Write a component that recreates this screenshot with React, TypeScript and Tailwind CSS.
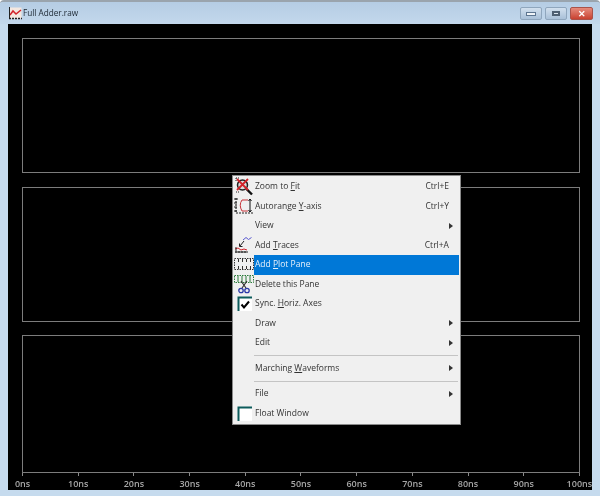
const ticks = ["0ns","10ns","20ns","30ns","40ns","50ns","60ns","70ns","80ns","90ns","100ns"];

function Mn({ children }: { children: string }) {
  return <span className="underline underline-offset-1">{children}</span>;
}

function IconZoom() {
  return (
    <svg width="20" height="19" viewBox="0 0 20 19" fill="none">
      <circle cx="8.500" cy="8" r="5" stroke="#222" strokeWidth="1.500" fill="#dcdcdc" />
      <path d="M12.500 12l5.500 5.500" stroke="#111" strokeWidth="2.400" />
      <path d="M3 2l11 11M14 2L3 13" stroke="#d2232a" strokeWidth="1.800" />
      <path d="M2 1h4M2 1v4M2 15h4" stroke="#222" strokeWidth="1" strokeDasharray="1 1" />
    </svg>
  );
}
function IconAuto() {
  return (
    <svg width="20" height="19" viewBox="0 0 20 19" fill="none">
      <path d="M2 1v15h17" stroke="#222" strokeWidth="1.200" strokeDasharray="2 1" />
      <path d="M0 2h4M0 6h3M0 10h3M0 14h3" stroke="#222" strokeWidth="1" />
      <path d="M14 3H8Q4.500 8 8 14h6" stroke="#c9343a" strokeWidth="1" />
      <path d="M16 2v13M14.500 4L16 2l1.500 2M14.500 13l1.500 2 1.500-2" stroke="#111" strokeWidth="1" />
    </svg>
  );
}
function IconTraces() {
  return (
    <svg width="20" height="19" viewBox="0 0 20 19" fill="none">
      <path d="M9 4l3-2.500 2.500 2 3-2" stroke="#5a5ad0" strokeWidth="1" />
      <path d="M10 5L6 10" stroke="#222" strokeWidth="1" />
      <path d="M5.500 7.500v3H8.500" stroke="#222" strokeWidth="1" />
      <path d="M1 13l3-1 3 2 3-1 3 1" stroke="#d2232a" strokeWidth="1" />
      <path d="M1 16h13M2 11v6M5 15v2M8 15v2M11 15v2" stroke="#222" strokeWidth="1" />
    </svg>
  );
}
function IconPlotPane() {
  return (
    <svg width="20" height="19" viewBox="0 0 20 19" fill="none">
      <rect x="0.500" y="3.500" width="19" height="11" stroke="#333" strokeDasharray="1.500 1" />
      <path d="M1 9.500h18" stroke="#e8eef5" strokeWidth="1" strokeDasharray="1.500 1" />
      <path d="M4.500 4v3M8.500 4v3M12.500 4v3M16.500 4v3M4.500 11v3M8.500 11v3M12.500 11v3M16.500 11v3" stroke="#333" strokeWidth="1" />
    </svg>
  );
}
function IconDelete() {
  return (
    <svg width="20" height="19" viewBox="0 0 20 19" fill="none">
      <rect x="0.500" y="0.500" width="19" height="7" stroke="#2a7a3a" strokeDasharray="1.500 1" />
      <path d="M4 1v6M8 1v6M12 1v6M16 1v6" stroke="#2a7a3a" strokeWidth="1" />
      <path d="M7 6l5 7M13 6l-5 7" stroke="#333" strokeWidth="1.200" />
      <circle cx="7" cy="15.500" r="2.200" stroke="#2c3aa8" strokeWidth="1.300" />
      <circle cx="13" cy="15.500" r="2.200" stroke="#2c3aa8" strokeWidth="1.300" />
    </svg>
  );
}
function IconSync() {
  return (
    <svg width="20" height="19" viewBox="0 0 20 19" fill="none">
      <rect x="4" y="3" width="14" height="14" fill="#fff" />
      <path d="M4.500 17V3.500H18" stroke="#0d5c5c" strokeWidth="2" />
      <path d="M7.500 10.500l2.500 3 5-6" stroke="#000" strokeWidth="2" />
    </svg>
  );
}
function IconFloat() {
  return (
    <svg width="20" height="19" viewBox="0 0 20 19" fill="none">
      <rect x="4" y="3" width="14" height="14" fill="#fff" />
      <path d="M4.500 17V3.500H18" stroke="#0d5c5c" strokeWidth="2" />
    </svg>
  );
}

type Row = {
  label: React.ReactNode;
  icon?: React.ReactNode;
  shortcut?: string;
  sub?: boolean;
  active?: boolean;
};

function MenuRow({ label, icon, shortcut, sub, active }: Row) {
  return (
    <div className="mr-[1px] flex h-[19.5px] items-center">
      <div className="flex w-[21px] shrink-0 items-center justify-center">{icon}</div>
      <div className={`flex h-full min-w-0 flex-1 items-center pl-[1px] pr-[6px] ${active ? "bg-[#0078d7] text-[#e6f0fa]" : ""}`}>
        <span className="flex-1 whitespace-pre">{label}</span>
        {shortcut && <span className="mr-[4px]">{shortcut}</span>}
        {sub && <span className="h-0 w-0 border-y-[3px] border-l-[4px] border-y-transparent border-l-[#333]" />}
      </div>
    </div>
  );
}

function Sep() {
  return <div className="my-[2.5px] ml-[21px] mr-[2px] h-px bg-[#c4c4c4]" />;
}

export default function App() {
  return (
    <div className="relative flex h-[496px] w-[600px] flex-col overflow-hidden rounded-t-[4px] border-t-2 border-[#9aa4ad] bg-[#c6dbee] blur-[0.35px]" style={{ fontFamily: '"Open Sans", "Noto Sans", sans-serif' }}>
      <div className="flex h-[22px] shrink-0 items-center justify-between bg-gradient-to-b from-[#b5cde4] to-[#c3d8ec] pl-[9px] pr-[7px]">
        <div className="flex items-center gap-[1px]">
          <svg width="13" height="13" viewBox="0 0 13 13" fill="none">
            <rect x="0.500" y="0.500" width="12" height="11" fill="#f4e8e0" />
            <path d="M1 8l3-4 3 3 5-4" stroke="#d2232a" strokeWidth="1.500" />
            <path d="M0 11.500h13" stroke="#222" strokeWidth="1.400" strokeDasharray="2 1" />
            <path d="M.5 0v12" stroke="#222" />
          </svg>
          <span className="text-[8.2px] text-[#1a2530]">Full Adder.raw</span>
        </div>
        <div className="flex items-center gap-[3px]">
          <div className="flex h-[13px] w-[22px] items-center justify-center rounded-[2px] border border-[#8fa6bd] bg-gradient-to-b from-[#d2e0ee] to-[#a9c0d8]">
            <div className="mt-[2px] h-[2px] w-[8px] bg-[#f0f4f8] outline outline-1 outline-[#5d7590]" />
          </div>
          <div className="flex h-[13px] w-[22px] items-center justify-center rounded-[2px] border border-[#8fa6bd] bg-gradient-to-b from-[#d2e0ee] to-[#a9c0d8]">
            <div className="h-[5px] w-[8px] border-2 border-[#4e5f72] bg-[#dbe6f0]" />
          </div>
          <div className="flex h-[13px] w-[23px] items-center justify-center rounded-[2px] border border-[#a9534a] bg-gradient-to-b from-[#e58a7c] to-[#c8402f] text-[9px] font-bold leading-none text-white">
            ✕
          </div>
        </div>
      </div>
      <div className="mx-[8px] flex h-[466px] flex-col bg-black pl-[14px] pr-[12px] pt-[14px]">
        <div className="h-[135px] shrink-0 border border-[#7c7c7c]" />
        <div className="mt-[14px] h-[135px] shrink-0 border border-[#7c7c7c]" />
        <div className="mt-[13px] h-[138px] shrink-0 border border-[#7c7c7c]" />
        <div className="flex h-[4px] justify-between">
          {ticks.map((t) => (
            <div key={t} className="w-px bg-[#8a8a8a]" />
          ))}
        </div>
        <div className="mt-[1px] flex justify-between">
          {ticks.map((t) => (
            <div key={t} className="flex w-px justify-center">
              <span className="text-[9px] font-semibold leading-[13px] text-[#a6a6a6]">{t}</span>
            </div>
          ))}
        </div>
      </div>
      <div className="absolute left-[232px] top-[173px] w-[229px] border border-[#8a8a8a] bg-[#f0f0f0] pb-px pt-px text-[8.5px] text-[#333]">
        <MenuRow icon={<IconZoom />} label={<>Zoom to <Mn>F</Mn>it</>} shortcut="Ctrl+E" />
        <MenuRow icon={<IconAuto />} label={<>Autorange <Mn>Y</Mn>-axis</>} shortcut="Ctrl+Y" />
        <MenuRow label="View" sub />
        <MenuRow icon={<IconTraces />} label={<>Add <Mn>T</Mn>races</>} shortcut="Ctrl+A" />
        <MenuRow active icon={<IconPlotPane />} label={<>Add <Mn>P</Mn>lot Pane</>} />
        <MenuRow icon={<IconDelete />} label="Delete this Pane" />
        <MenuRow icon={<IconSync />} label={<>Sync. <Mn>H</Mn>oriz. Axes</>} />
        <MenuRow label="Draw" sub />
        <MenuRow label="Edit" sub />
        <Sep />
        <MenuRow label={<>Marching <Mn>W</Mn>aveforms</>} sub />
        <Sep />
        <MenuRow label="File" sub />
        <MenuRow icon={<IconFloat />} label="Float Window" />
      </div>
    </div>
  );
}
